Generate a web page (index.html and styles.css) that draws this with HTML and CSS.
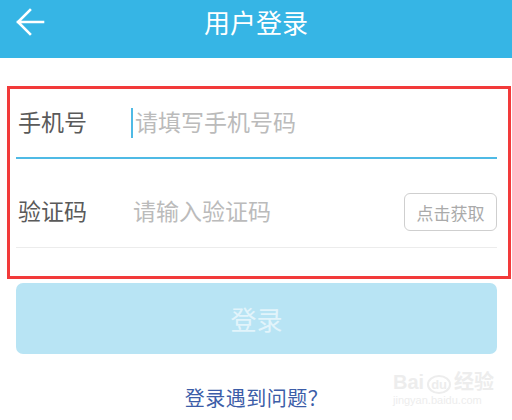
FILE: index.html
```html
<!DOCTYPE html>
<html lang="zh-CN">
  <head>
    <meta charset="UTF-8" />
    <meta name="viewport" content="width=device-width, initial-scale=1.0" />
    <title>用户登录</title>
    <link rel="stylesheet" href="styles.css">
  </head>
  <body>
    <header class="top-bar">
      <button class="back-btn" aria-label="返回">
        <svg width="30" height="30" viewBox="0 0 30 30">
          <path d="M28 14H3M15 2L3 14L15 26" fill="none" stroke="#fff" stroke-width="2.6" stroke-linecap="square" />
        </svg>
      </button>
      <h1>用户登录</h1>
    </header>

    <main>
      <form class="login-form">
        <div class="field field-phone">
          <label for="phone">手机号</label>
          <span class="caret"></span>
          <input type="text" id="phone" placeholder="请填写手机号码" />
        </div>
        <div class="field field-code">
          <label for="code">验证码</label>
          <input type="text" id="code" placeholder="请输入验证码" />
          <button type="button" class="code-btn">点击获取</button>
        </div>
      </form>

      <div class="actions">
        <button class="submit-btn" disabled>登录</button>
        <a class="help-link" href="#">登录遇到问题？</a>
      </div>
    </main>

    <div class="watermark">
      <div class="wm-logo">Bai<span class="wm-du">du</span>经验</div>
      <div class="wm-url">jingyan.baidu.com</div>
    </div>
  </body>
</html>
```

FILE: styles.css
```css
:root {
  --brand-blue: #36b5e5;
  --line-blue: #4fbae5;
  --label-color: #5a5a5a;
  --hint-color: #bbb;
  --mark-red: #f23a3a;
}

* {
  margin: 0;
  padding: 0;
  box-sizing: border-box;
}

body {
  font-family: "Noto Sans CJK SC", "Noto Sans", sans-serif;
  background: #fff;
  width: 512px;
  height: 420px;
  overflow: hidden;
  position: relative;
}

.top-bar {
  height: 58px;
  background: var(--brand-blue);
  display: flex;
  align-items: center;
  justify-content: center;
  position: relative;
}

.top-bar h1 {
  color: #fff;
  font-size: 26px;
  font-weight: 400;
  line-height: 1;
  margin-top: -14px;
}

.back-btn {
  position: absolute;
  left: 15px;
  top: 8px;
  background: none;
  border: none;
  width: 30px;
  height: 30px;
  display: flex;
}

.login-form {
  margin: 28px 1px 0 7px;
  border: 3px solid var(--mark-red);
  padding: 0 11px 28px 6px;
}

.field {
  display: flex;
  align-items: center;
}

.field label {
  width: 115px;
  padding-left: 2px;
  font-size: 23px;
  color: var(--label-color);
  flex-shrink: 0;
}

.field input {
  flex: 1;
  min-width: 0;
  border: none;
  outline: none;
  font-family: inherit;
  font-size: 23px;
  color: var(--label-color);
  background: transparent;
  padding-left: 2px;
}

.field input::placeholder {
  color: var(--hint-color);
}

.field-phone {
  height: 70px;
  padding-bottom: 5px;
  border-bottom: 2px solid var(--line-blue);
}

.caret {
  width: 2px;
  height: 30px;
  background: var(--line-blue);
  flex-shrink: 0;
  margin-top: 4px;
}

.field-code {
  height: 89px;
  padding-top: 14px;
  border-bottom: 1px solid #ececec;
}

.code-btn {
  width: 93px;
  height: 38px;
  border: 1.5px solid #cfcfcf;
  border-radius: 6px;
  background: #fff;
  color: #aaa;
  font-family: inherit;
  font-size: 17px;
  flex-shrink: 0;
  margin-top: 4px;
}

.actions {
  display: flex;
  flex-direction: column;
  align-items: center;
  padding: 4px 15px 0 16px;
}

.submit-btn {
  width: 100%;
  height: 71px;
  border: none;
  border-radius: 7px;
  background: #b8e4f4;
  color: #e2f4fb;
  font-family: inherit;
  font-size: 26px;
}

.help-link {
  margin-top: 29px;
  font-size: 20px;
  letter-spacing: 0.5px;
  color: #3c5da8;
  text-decoration: none;
}

.watermark {
  position: absolute;
  left: 393px;
  top: 372px;
  color: #ededed;
  font-family: "Liberation Sans", "Noto Sans CJK SC", sans-serif;
  line-height: 1;
}

.wm-logo {
  font-size: 20px;
  font-weight: 700;
}

.wm-du {
  font-size: 13px;
  border: 2px solid #ededed;
  border-radius: 50%;
  padding: 0 2px;
  margin: 0 3px;
}

.wm-url {
  font-size: 11px;
  margin-top: 3px;
}
```
